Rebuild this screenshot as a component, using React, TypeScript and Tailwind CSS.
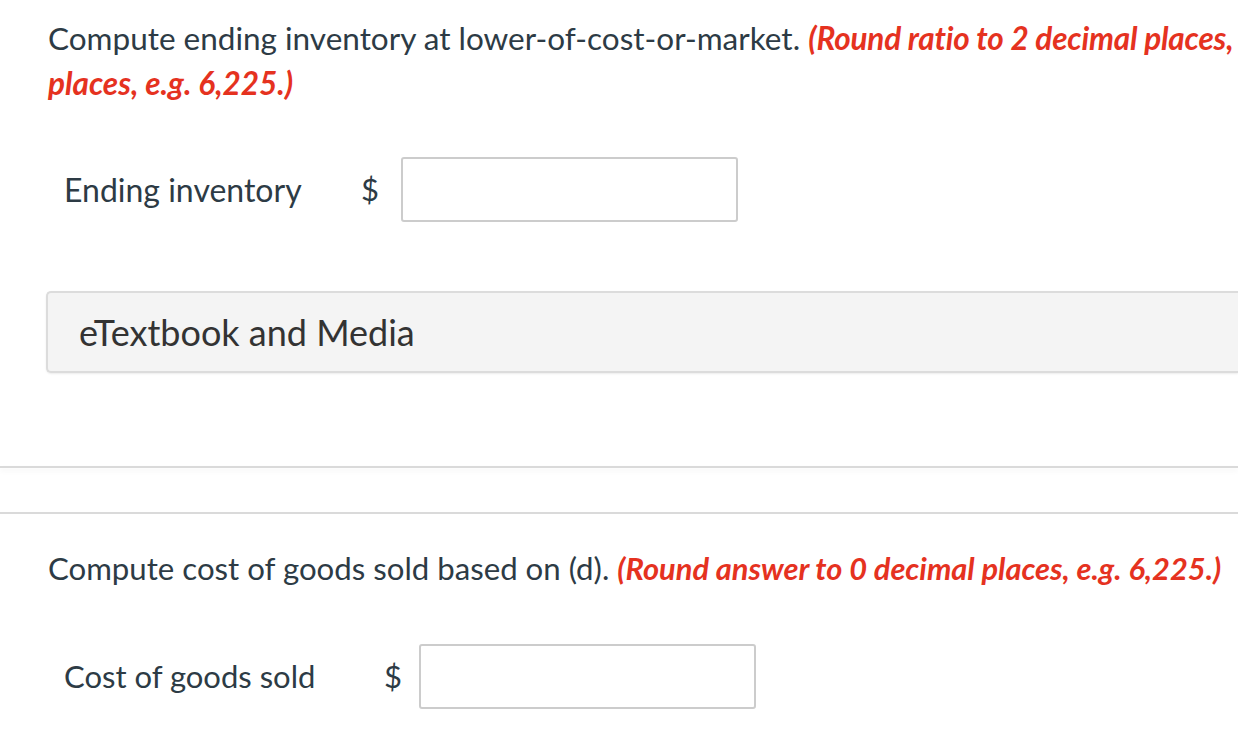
export default function App() {
  return (
    <div className="w-[1238px] h-[756px] overflow-hidden bg-white font-['Lato',sans-serif] text-[#2d3b45] [font-variant-ligatures:none]">
      <div className="pl-12 pt-[16px]">
        <p className="text-[31.5px] leading-[45px] whitespace-nowrap">
          Compute ending inventory at lower-of-cost-or-market.{" "}
          <em className="font-bold text-[#e5321f] tracking-[-0.005em]">
            (Round ratio to 2 decimal places, e.g. 0.52 and final answer to 0 decimal
          </em>
          <br />
          <em className="font-bold text-[#e5321f]">places, e.g. 6,225.)</em>
        </p>
      </div>

      <div className="flex items-center pl-16 mt-[51px]">
        <span className="text-[32px] w-[297px]">Ending inventory</span>
        <span className="text-[31px] w-[40px]">$</span>
        <div className="w-[337px] h-[65px] border-2 border-[#cccccc] rounded-[3px] bg-white" />
      </div>

      <div className="ml-[46px] mt-[69px] h-[82px] border-2 border-r-0 border-[#dcdcdc] rounded-l-[5px] bg-[#f4f4f4] shadow-[0_1px_2px_rgba(0,0,0,0.08)] flex items-center pl-[31px]">
        <span className="text-[36px] text-[#333333]">eTextbook and Media</span>
      </div>

      <div className="mt-[93px] h-[2px] bg-[#dadada] shadow-[0_3px_5px_rgba(0,0,0,0.06)]" />
      <div className="mt-[44px] h-[2px] bg-[#dadada]" />

      <div className="pl-12 pt-[32px]">
        <p className="text-[31.2px] leading-[45px] whitespace-nowrap">
          Compute cost of goods sold based on (d).{" "}
          <em className="font-bold text-[#e5321f] text-[30.8px]">
            (Round answer to 0 decimal places, e.g. 6,225.)
          </em>
        </p>
      </div>

      <div className="flex items-center pl-16 mt-[53px]">
        <span className="text-[31px] w-[320px]">Cost of goods sold</span>
        <span className="text-[31px] w-[35px]">$</span>
        <div className="w-[337px] h-[65px] border-2 border-[#cccccc] rounded-[3px] bg-white" />
      </div>
    </div>
  );
}
